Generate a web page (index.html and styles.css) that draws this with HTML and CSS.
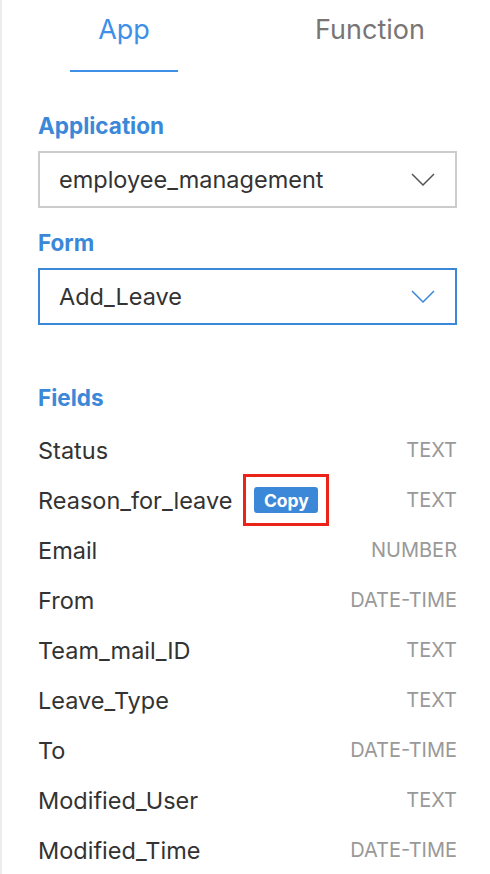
FILE: index.html
```html
<!DOCTYPE html>
<html lang="en">

<head>
    <meta charset="UTF-8">
    <meta name="viewport" content="width=device-width, initial-scale=1.0">
    <title>Fields</title>
    <link rel="stylesheet" href="styles.css">
</head>

<body>
    <div class="panel">
        <div class="tabs">
            <div class="tab active">App</div>
            <div class="tab">Function</div>
        </div>

        <label class="section-label">Application</label>
        <div class="select">
            <span>employee_management</span>
            <svg class="chevron" width="24" height="13" viewBox="0 0 24 13"><path d="M1 1 L12 12 L23 1" fill="none" stroke="#555" stroke-width="1.5"/></svg>
        </div>

        <label class="section-label">Form</label>
        <div class="select focused">
            <span>Add_Leave</span>
            <svg class="chevron" width="24" height="13" viewBox="0 0 24 13"><path d="M1 1 L12 12 L23 1" fill="none" stroke="#3b88d8" stroke-width="1.5"/></svg>
        </div>

        <h3 class="fields-title">Fields</h3>
        <ul class="fields">
            <li><span class="name">Status</span><span class="type">TEXT</span></li>
            <li><span class="name">Reason_for_leave <span class="copy-wrap"><button class="copy">Copy</button></span></span><span class="type">TEXT</span></li>
            <li><span class="name">Email</span><span class="type">NUMBER</span></li>
            <li><span class="name">From</span><span class="type">DATE-TIME</span></li>
            <li><span class="name">Team_mail_ID</span><span class="type">TEXT</span></li>
            <li><span class="name">Leave_Type</span><span class="type">TEXT</span></li>
            <li><span class="name">To</span><span class="type">DATE-TIME</span></li>
            <li><span class="name">Modified_User</span><span class="type">TEXT</span></li>
            <li><span class="name">Modified_Time</span><span class="type">DATE-TIME</span></li>
        </ul>
    </div>
</body>

</html>
```

FILE: styles.css
```css
:root {
    --blue: #3b88d8;
    --tab-blue: #3d8fe8;
    --text: #333;
    --muted: #999;
}

body {
    margin: 0;
    font-family: Inter, "Open Sans", sans-serif;
    background: #fff;
    color: var(--text);
}

.panel {
    border-left: 2px solid #ececec;
    padding: 0 33px 0 36px;
    min-height: 874px;
    box-sizing: border-box;
}

.tabs {
    display: flex;
    height: 72px;
    margin-left: -36px;
    margin-right: -33px;
}

.tab {
    flex: 1;
    text-align: center;
    font-size: 27px;
    line-height: 32px;
    color: #797575;
    padding-top: 14px;
    box-sizing: border-box;
}

.tab.active {
    color: var(--tab-blue);
    flex: 0 0 108px;
    margin-left: 68px;
    border-bottom: 2px solid var(--tab-blue);
}

.tab:last-child {
    padding-left: 72px;
}

.section-label {
    display: block;
    color: var(--blue);
    font-weight: bold;
    font-size: 22.5px;
    line-height: 26px;
    margin-top: 41px;
    margin-bottom: 12px;
}

.select + .section-label {
    margin-top: 22px;
}

.select {
    display: flex;
    align-items: center;
    justify-content: space-between;
    height: 57px;
    box-sizing: border-box;
    border: 2px solid #ccc;
    padding: 0 20px 0 19px;
    font-size: 23.5px;
    color: var(--text);
}

.select.focused {
    border-color: var(--blue);
}

.fields-title {
    color: var(--blue);
    font-size: 22.5px;
    line-height: 26px;
    font-weight: bold;
    margin: 60px 0 14px;
}

.fields {
    list-style: none;
    margin: 0;
    padding: 0;
}

.fields li {
    display: flex;
    align-items: center;
    justify-content: space-between;
    height: 50px;
    font-size: 23.5px;
}

.name {
    display: flex;
    align-items: center;
}

.type {
    font-size: 20px;
    color: var(--muted);
}

.copy-wrap {
    display: inline-block;
    margin-left: 11px;
    padding: 10px 8px;
    border: 3px solid #ea2418;
}

.copy {
    display: block;
    width: 64px;
    height: 26px;
    border: none;
    border-radius: 3px;
    background: var(--blue);
    color: #fff;
    font-family: inherit;
    font-weight: bold;
    font-size: 17.5px;
    padding: 0;
}
```
